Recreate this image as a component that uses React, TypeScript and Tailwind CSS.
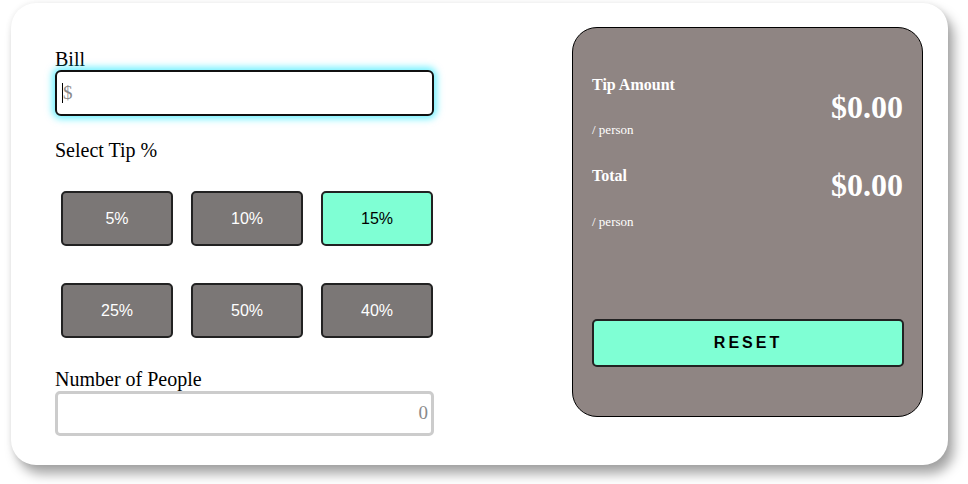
const tips = [
  { label: "5%", active: false },
  { label: "10%", active: false },
  { label: "15%", active: true },
  { label: "25%", active: false },
  { label: "50%", active: false },
  { label: "40%", active: false },
];

function ResultRow({ title, titleGap, amountTop, personGap }: { title: string; titleGap: string; amountTop: string; personGap: string }) {
  return (
    <div className={`flex items-start justify-between ${titleGap}`}>
      <div className="flex flex-col">
        <p className="text-[16px] font-bold leading-[18px] text-white">{title}</p>
        <p className={`text-[13px] leading-[15px] text-white ${personGap}`}>/ person</p>
      </div>
      <p className={`text-[32px] font-bold leading-[36px] text-white ${amountTop}`}>$0.00</p>
    </div>
  );
}

export default function App() {
  return (
    <div className="min-h-screen bg-white pl-[11px] pt-[3px] font-['Liberation_Serif',serif]">
      <div className="flex h-[462px] w-[937px] items-start justify-between rounded-[25px] bg-white pl-[44px] pr-[25px] pt-[24px] shadow-[0_0_6px_rgba(0,0,0,0.08),6px_9px_12px_rgba(0,0,0,0.35)]">
        <div className="flex w-[379px] flex-col pt-[21px]">
          <label className="block text-[20px] leading-[22px] text-black">Bill</label>
          <div className="flex h-[46px] items-center rounded-[6px] border-2 border-[#111] bg-white pl-[5px] shadow-[0_0_7px_3px_rgba(0,230,255,0.55)]">
            <span className="h-[20px] w-px bg-black" />
            <span className="text-[19px] text-[#8a8a8a]">$</span>
          </div>

          <p className="mt-[23px] text-[20px] leading-[22px] text-black">Select Tip %</p>

          <div className="mt-[30px] grid grid-cols-3 gap-x-[18px] gap-y-[37px] pl-[6px] pr-px">
            {tips.map((tip) => (
              <button
                key={tip.label}
                className={`h-[55px] rounded-[5px] border-2 border-[#222] font-['Liberation_Sans',sans-serif] text-[16px] ${
                  tip.active ? "bg-[#7fffd4] text-black" : "bg-[#7b7776] text-white"
                }`}
              >
                {tip.label}
              </button>
            ))}
          </div>

          <p className="mt-[30px] text-[20px] leading-[22px] text-black">Number of People</p>
          <div className="mt-px flex h-[45px] items-center justify-end rounded-[5px] border-[3px] border-[#cccccc] bg-white pr-[3px]">
            <span className="text-[19px] text-[#8a8a8a]">0</span>
          </div>
        </div>

        <div className="flex h-[390px] w-[351px] flex-col rounded-[25px] border border-black bg-[#8f8583] px-[19px] pt-[48px]">
          <ResultRow title="Tip Amount" titleGap="" amountTop="mt-[13px]" personGap="mt-[28px]" />
          <ResultRow title="Total" titleGap="mt-[30px]" amountTop="mt-0" personGap="mt-[29px]" />
          <button className="mt-[90px] h-[48px] w-[312px] rounded-[5px] border-2 border-[#222] bg-[#7fffd4] font-['Liberation_Sans',sans-serif] text-[16px] font-bold tracking-[3px] text-black">
            RESET
          </button>
        </div>
      </div>
    </div>
  );
}
